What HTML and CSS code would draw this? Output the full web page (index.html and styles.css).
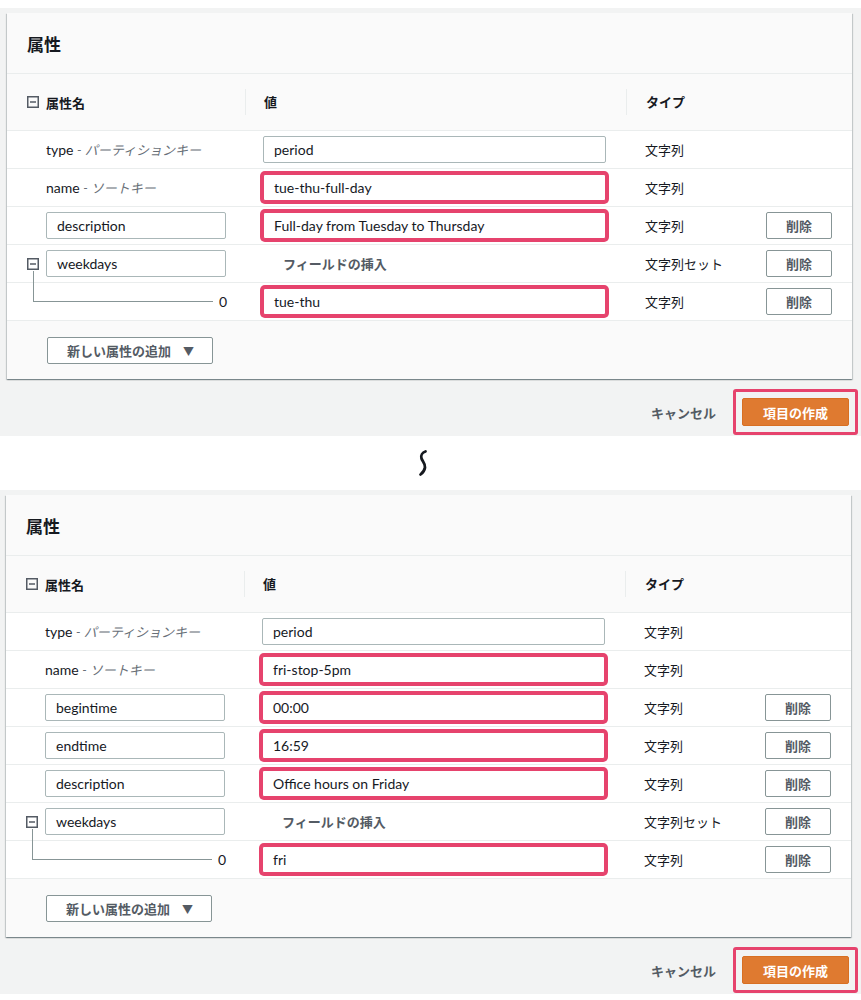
FILE: index.html
```html
<!DOCTYPE html>
<html lang="ja">
<head>
    <meta charset="UTF-8">
    <meta name="viewport" content="width=device-width, initial-scale=1.0">
    <title>属性 - 項目の作成</title>
    <link rel="stylesheet" href="styles.css">
</head>
<body>
    <div class="page">

        <!-- 1: tue-thu-full-day -->
        <section class="panel">
            <div class="card">
                <div class="card-title">属性</div>
                <div class="attr-head">
                    <div class="col-name">
                        <span class="tree-slot">
                            <svg class="toggle" width="12" height="12" viewBox="0 0 12 12"><rect x="0.75" y="0.75" width="10.5" height="10.5" fill="none" stroke="#545b64" stroke-width="1.5"/><line x1="3" y1="6" x2="9" y2="6" stroke="#545b64" stroke-width="1.5"/></svg>
                        </span>
                        <span>属性名</span>
                    </div>
                    <div class="col-value">値</div>
                    <div class="col-type">タイプ</div>
                </div>

                <div class="attr-row">
                    <div class="col-name"><span class="tree-slot"></span><span>type <span class="key">- パーティションキー</span></span></div>
                    <div class="col-value"><div class="input input-value">period</div></div>
                    <div class="col-type"><span>文字列</span></div>
                </div>
                <div class="attr-row">
                    <div class="col-name"><span class="tree-slot"></span><span>name <span class="key">- ソートキー</span></span></div>
                    <div class="col-value"><div class="input input-value marked">tue-thu-full-day</div></div>
                    <div class="col-type"><span>文字列</span></div>
                </div>
                <div class="attr-row">
                    <div class="col-name"><span class="tree-slot"></span><div class="input input-name">description</div></div>
                    <div class="col-value"><div class="input input-value marked">Full-day from Tuesday to Thursday</div></div>
                    <div class="col-type"><span>文字列</span><button class="btn">削除</button></div>
                </div>
                <div class="attr-row">
                    <div class="col-name">
                        <span class="tree-slot">
                            <svg class="toggle" width="12" height="12" viewBox="0 0 12 12"><rect x="0.75" y="0.75" width="10.5" height="10.5" fill="none" stroke="#545b64" stroke-width="1.5"/><line x1="3" y1="6" x2="9" y2="6" stroke="#545b64" stroke-width="1.5"/></svg>
                        </span>
                        <div class="input input-name">weekdays</div>
                    </div>
                    <div class="col-value"><span class="insert-label">フィールドの挿入</span></div>
                    <div class="col-type"><span>文字列セット</span><button class="btn">削除</button></div>
                </div>
                <div class="attr-row">
                    <div class="col-name"><span class="elbow"></span><span class="index">0</span></div>
                    <div class="col-value"><div class="input input-value marked">tue-thu</div></div>
                    <div class="col-type"><span>文字列</span><button class="btn">削除</button></div>
                </div>

                <div class="card-footer">
                    <button class="btn btn-add">新しい属性の追加<span class="caret">▼</span></button>
                </div>
            </div>
            <div class="actions">
                <span class="cancel">キャンセル</span>
                <span class="marked-box"><button class="btn btn-primary">項目の作成</button></span>
            </div>
        </section>

        <div class="gap">
            <svg width="12" height="28" viewBox="0 0 12 28"><path d="M8.5 2.5 C5.5 3.5 3.5 6.5 4.5 9.5 C5.5 12.5 8.5 14.5 8 18.5 C7.5 22 5.5 24 3.5 25.5" fill="none" stroke="#16191f" stroke-width="2.8" stroke-linecap="round"/></svg>
        </div>

        <!-- 2: fri-stop-5pm -->
        <section class="panel panel-second">
            <div class="card">
                <div class="card-title">属性</div>
                <div class="attr-head">
                    <div class="col-name">
                        <span class="tree-slot">
                            <svg class="toggle" width="12" height="12" viewBox="0 0 12 12"><rect x="0.75" y="0.75" width="10.5" height="10.5" fill="none" stroke="#545b64" stroke-width="1.5"/><line x1="3" y1="6" x2="9" y2="6" stroke="#545b64" stroke-width="1.5"/></svg>
                        </span>
                        <span>属性名</span>
                    </div>
                    <div class="col-value">値</div>
                    <div class="col-type">タイプ</div>
                </div>

                <div class="attr-row">
                    <div class="col-name"><span class="tree-slot"></span><span>type <span class="key">- パーティションキー</span></span></div>
                    <div class="col-value"><div class="input input-value">period</div></div>
                    <div class="col-type"><span>文字列</span></div>
                </div>
                <div class="attr-row">
                    <div class="col-name"><span class="tree-slot"></span><span>name <span class="key">- ソートキー</span></span></div>
                    <div class="col-value"><div class="input input-value marked">fri-stop-5pm</div></div>
                    <div class="col-type"><span>文字列</span></div>
                </div>
                <div class="attr-row">
                    <div class="col-name"><span class="tree-slot"></span><div class="input input-name">begintime</div></div>
                    <div class="col-value"><div class="input input-value marked">00:00</div></div>
                    <div class="col-type"><span>文字列</span><button class="btn">削除</button></div>
                </div>
                <div class="attr-row">
                    <div class="col-name"><span class="tree-slot"></span><div class="input input-name">endtime</div></div>
                    <div class="col-value"><div class="input input-value marked">16:59</div></div>
                    <div class="col-type"><span>文字列</span><button class="btn">削除</button></div>
                </div>
                <div class="attr-row">
                    <div class="col-name"><span class="tree-slot"></span><div class="input input-name">description</div></div>
                    <div class="col-value"><div class="input input-value marked">Office hours on Friday</div></div>
                    <div class="col-type"><span>文字列</span><button class="btn">削除</button></div>
                </div>
                <div class="attr-row">
                    <div class="col-name">
                        <span class="tree-slot">
                            <svg class="toggle" width="12" height="12" viewBox="0 0 12 12"><rect x="0.75" y="0.75" width="10.5" height="10.5" fill="none" stroke="#545b64" stroke-width="1.5"/><line x1="3" y1="6" x2="9" y2="6" stroke="#545b64" stroke-width="1.5"/></svg>
                        </span>
                        <div class="input input-name">weekdays</div>
                    </div>
                    <div class="col-value"><span class="insert-label">フィールドの挿入</span></div>
                    <div class="col-type"><span>文字列セット</span><button class="btn">削除</button></div>
                </div>
                <div class="attr-row">
                    <div class="col-name"><span class="elbow"></span><span class="index">0</span></div>
                    <div class="col-value"><div class="input input-value marked">fri</div></div>
                    <div class="col-type"><span>文字列</span><button class="btn">削除</button></div>
                </div>

                <div class="card-footer">
                    <button class="btn btn-add">新しい属性の追加<span class="caret">▼</span></button>
                </div>
            </div>
            <div class="actions">
                <span class="cancel">キャンセル</span>
                <span class="marked-box"><button class="btn btn-primary">項目の作成</button></span>
            </div>
        </section>

    </div>
</body>
</html>
```

FILE: styles.css
```css
* {
    margin: 0;
    padding: 0;
    box-sizing: border-box;
}

body {
    font-family: Lato, "Noto Sans CJK JP", sans-serif;
    font-size: 14px;
    color: #16191f;
    background: white;
}

.page {
    padding-top: 8px;
}

.panel {
    background: #f2f3f3;
    padding: 5px 9px 0 7px;
}

.panel-second {
    padding-left: 6px;
    padding-right: 10px;
}

.card {
    background: #fafafa;
    box-shadow: 0 1px 1px 0 rgba(0, 28, 36, 0.3),
                1px 1px 1px 0 rgba(0, 28, 36, 0.15),
                -1px 1px 1px 0 rgba(0, 28, 36, 0.15);
}

.card-title {
    height: 61px;
    padding-left: 20px;
    display: flex;
    align-items: center;
    font-size: 17px;
    font-weight: bold;
    border-bottom: 1px solid #eaeded;
}

/* table */

.attr-head,
.attr-row {
    display: grid;
    grid-template-columns: 238px 381px 1fr;
    align-items: center;
}

.attr-head {
    height: 56px;
    font-size: 13px;
    font-weight: bold;
    color: #16191f;
}

.attr-head .col-value,
.attr-head .col-type {
    height: 26px;
    line-height: 26px;
    border-left: 1px solid #eaeded;
}

.attr-head .col-value {
    padding-left: 18px;
}

.attr-row {
    height: 38px;
    background: white;
    border-top: 1px solid #eaeded;
}

.col-name {
    display: flex;
    align-items: center;
    padding-left: 20px;
    height: 100%;
}

.attr-head .col-name {
    height: auto;
}

.tree-slot {
    flex: none;
    width: 12px;
    height: 12px;
    margin-right: 7px;
}

.toggle {
    display: block;
}

.key {
    font-size: 13px;
    font-style: italic;
    color: #687078;
}

.col-value {
    padding-left: 18px;
}

.col-type {
    display: flex;
    align-items: center;
    justify-content: space-between;
    padding: 0 20px 0 19px;
    font-size: 13px;
}

.input {
    height: 27px;
    line-height: 25px;
    padding-left: 10px;
    background: white;
    border: 1px solid #aab7b8;
    border-radius: 2px;
    white-space: nowrap;
}

.input-name {
    width: 180px;
}

.input-value {
    width: 343px;
}

.marked {
    border-color: #e6436d;
    box-shadow: 0 0 0 3px #e6436d;
    border-radius: 2px;
}

.insert-label {
    margin-left: 20px;
    font-size: 13px;
    font-weight: bold;
    color: #545b64;
}

.elbow {
    flex: none;
    align-self: flex-start;
    width: 180px;
    height: 31px;
    margin: -12px 0 0 6px;
    border-left: 1px solid #879596;
    border-bottom: 1px solid #879596;
}

.index {
    margin-left: 6px;
}

/* buttons */

.btn {
    font-family: inherit;
    font-size: 13px;
    font-weight: bold;
    color: #545b64;
    background: white;
    border: 1px solid #879596;
    border-radius: 2px;
    cursor: pointer;
}

.attr-row .btn {
    width: 66px;
    height: 27px;
}

.card-footer {
    height: 59px;
    border-top: 1px solid #eaeded;
    display: flex;
    align-items: center;
    padding-left: 40px;
}

.btn-add {
    width: 166px;
    height: 27px;
    text-align: left;
    padding-left: 19px;
}

.caret {
    font-size: 11px;
    margin-left: 12px;
}

.actions {
    display: flex;
    justify-content: flex-end;
    align-items: center;
    margin-right: -7px;
    padding: 10px 1px 1px 0;
}

.panel-second .actions {
    margin-right: -8px;
}

.cancel {
    font-size: 13px;
    font-weight: bold;
    color: #545b64;
    margin-right: 17px;
}

.marked-box {
    display: block;
    padding: 6px;
    border: 3px solid #e6436d;
    border-radius: 3px;
}

.btn-primary {
    display: block;
    width: 107px;
    height: 28px;
    color: white;
    background: #df7a30;
    border-color: #d86f22;
}

.gap {
    height: 54px;
    display: flex;
    align-items: center;
    justify-content: center;
    padding-right: 15px;
}

.gap svg {
    display: block;
}
```
